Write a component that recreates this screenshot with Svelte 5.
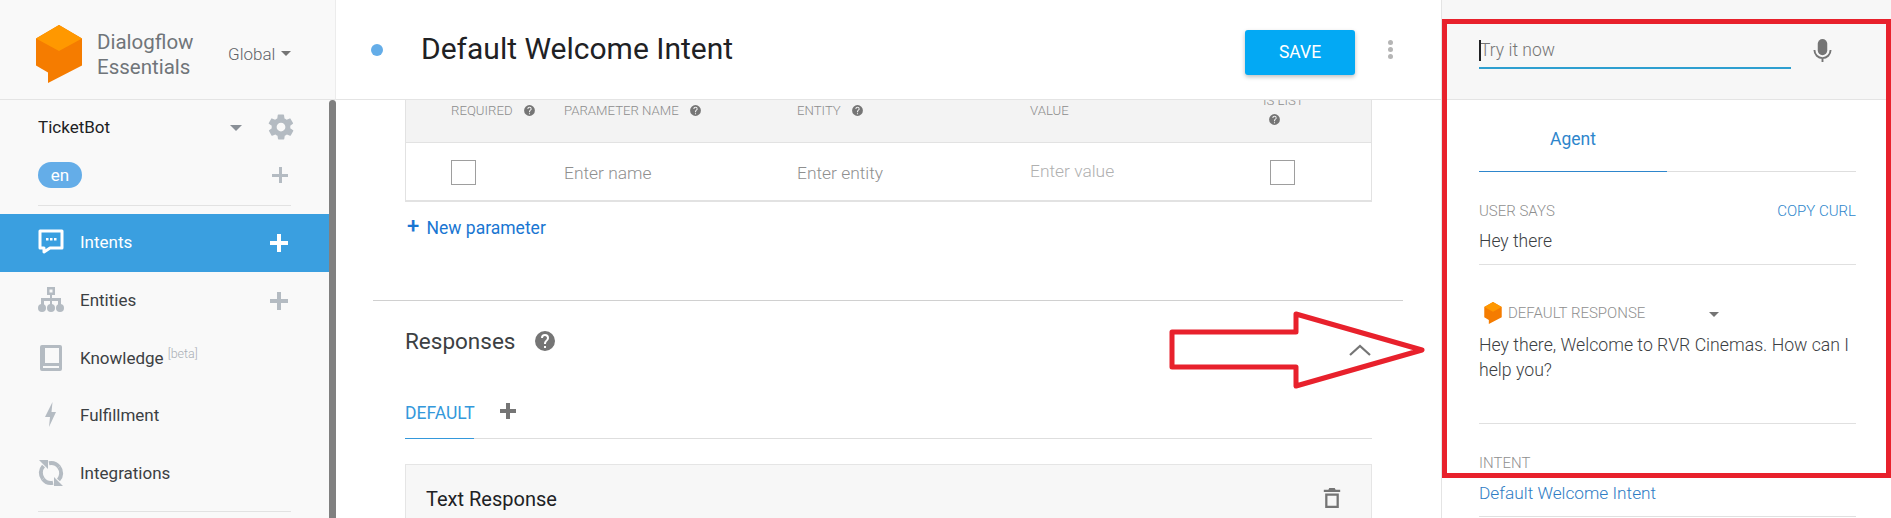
<script>
  const nav = [
    { label: 'Entities', icon: 'entities', plus: true },
    { label: 'Knowledge', icon: 'book', beta: true },
    { label: 'Fulfillment', icon: 'bolt' },
    { label: 'Integrations', icon: 'sync' }
  ];
  const help = 'M12 2a10 10 0 1 0 0 20 10 10 0 0 0 0-20zm1 17h-2v-2h2v2zm2.070-7.750-.9.920C13.450 12.900 13 13.500 13 15h-2v-.5c0-1.100.450-2.100 1.170-2.830l1.240-1.260A2 2 0 1 0 10 9H8a4 4 0 1 1 8 0c0 .880-.360 1.680-.930 2.250z';
</script>

<div class="app">
  <aside class="side">
    <div class="brand">
      <svg class="logo" viewBox="0 0 46 58">
        <path d="M23 0 46 13.500v27L12 58V47.500L0 40.500V13.500z" fill="#f57c00" />
        <path d="M23 0 46 13.500 23 26 0 13.500z" fill="#ff9800" />
      </svg>
      <div class="wordmark"><span>Dialogflow</span><span>Essentials</span></div>
      <div class="region">Global<i class="caret"></i></div>
    </div>
    <div class="side-body">
      <nav class="nav">
        <div class="agent">
          <span class="agent-name">TicketBot</span>
          <i class="caret agent-caret"></i>
          <svg class="gear" viewBox="0 0 24 24"><path fill="#b4bbc2" d="M19.400 13a7.600 7.600 0 0 0 0-2l2.100-1.600a.5.5 0 0 0 .1-.6l-2-3.500a.5.5 0 0 0-.6-.2l-2.500 1a7.300 7.300 0 0 0-1.700-1l-.4-2.700a.5.5 0 0 0-.5-.4h-4a.5.5 0 0 0-.5.4l-.4 2.700a7.300 7.300 0 0 0-1.700 1l-2.500-1a.5.5 0 0 0-.6.2l-2 3.500a.5.5 0 0 0 .1.600L4.600 11a7.600 7.600 0 0 0 0 2l-2.100 1.600a.5.5 0 0 0-.1.6l2 3.500c.1.200.4.300.6.200l2.500-1c.5.400 1.100.7 1.700 1l.4 2.700c0 .2.200.4.500.4h4c.3 0 .5-.2.500-.4l.4-2.700c.6-.3 1.200-.6 1.700-1l2.500 1c.2.100.5 0 .6-.2l2-3.500a.5.5 0 0 0-.1-.6zM12 15.500a3.500 3.500 0 1 1 0-7 3.500 3.500 0 0 1 0 7z" /></svg>
        </div>
        <div class="lang">
          <span class="pill">en</span>
          <span class="plus grey small"></span>
        </div>
        <div class="rule"></div>
        <div class="item active">
          <svg class="ico" viewBox="0 0 26 26"><path d="M2 2h22v17H12l-6 4v-4H2z" fill="none" stroke="#fff" stroke-width="3" stroke-linejoin="round" /><path d="M8 9h2.500v2.500H8zM12 9h2.500v2.500H12zM16 9h2.500v2.500H16z" fill="#fff" /></svg>
          <span>Intents</span>
          <span class="plus white"></span>
        </div>
        {#each nav as n}
          <div class="item">
            <svg class="ico" viewBox="0 0 26 26">
              {#if n.icon === 'entities'}
                <g fill="#b4bbc2">
                  <path d="M9 0h8v8h-3v3h9v7h-3v-4h-6v4h-2v-4H6v4H3v-7h9V8H9zm2.500 2.500v3h3v-3z" />
                  <circle cx="4" cy="21" r="4" /><circle cx="13" cy="21" r="4" /><circle cx="22" cy="21" r="4" />
                </g>
              {:else if n.icon === 'book'}
                <path fill="#b4bbc2" d="M4 0h18a2 2 0 0 1 2 2v22a2 2 0 0 1-2 2H4a2 2 0 0 1-2-2V2a2 2 0 0 1 2-2zm3 3v15h14V3zM5 21v2h16v-2z" />
              {:else if n.icon === 'bolt'}
                <path fill="#b4bbc2" d="M14.500 0 7 15h5l-1 10 7-15h-4.500z" />
              {:else}
                <g fill="none" stroke="#b4bbc2" stroke-width="4">
                  <path d="M5 19A10 10 0 0 1 5.500 6" /><path d="M11 3.200A10 10 0 0 1 21 7" /><path d="M21 7a10 10 0 0 1-.500 13" /><path d="M15 22.800A10 10 0 0 1 5 19" />
                </g>
                <path fill="#b4bbc2" d="M1 0h9v9zM25 26h-9v-9z" />
              {/if}
            </svg>
            <span>{n.label}{#if n.beta}<sup>[beta]</sup>{/if}</span>
            {#if n.plus}<span class="plus grey"></span>{/if}
          </div>
        {/each}
        <div class="rule last"></div>
      </nav>
      <div class="track"><div class="thumb"></div></div>
    </div>
  </aside>

  <main class="main">
    <header class="top">
      <i class="dot"></i>
      <h1>Default Welcome Intent</h1>
      <button class="save">SAVE</button>
      <span class="more"><i></i><i></i><i></i></span>
    </header>
    <div class="scroll">
      <section class="table">
        <div class="row head">
          <div class="cell low">REQUIRED <svg viewBox="0 0 24 24"><path fill="#757575" d={help} /></svg></div>
          <div class="cell low">PARAMETER NAME <svg viewBox="0 0 24 24"><path fill="#757575" d={help} /></svg></div>
          <div class="cell low">ENTITY <svg viewBox="0 0 24 24"><path fill="#757575" d={help} /></svg></div>
          <div class="cell low">VALUE</div>
          <div class="cell stack">IS LIST<svg viewBox="0 0 24 24"><path fill="#757575" d={help} /></svg></div>
        </div>
        <div class="row body">
          <div class="cell"><span class="check"></span></div>
          <div class="cell ph">Enter name</div>
          <div class="cell ph">Enter entity</div>
          <div class="cell ph light">Enter value</div>
          <div class="cell"><span class="check narrow"></span></div>
        </div>
      </section>
      <div class="new"><span class="newplus">+</span> New parameter</div>
      <div class="divider"></div>
      <div class="resp-head">
        <h2>Responses</h2>
        <svg class="big-help" viewBox="2 2 20 20"><path fill="#757575" d={help} /></svg>
        <svg class="chev" viewBox="0 0 22 12"><path d="M1 11 11 2l10 9" fill="none" stroke="#757575" stroke-width="2.200" /></svg>
      </div>
      <div class="tabs">
        <span class="tab">DEFAULT</span>
        <span class="plus dark"></span>
      </div>
      <div class="box">
        <span>Text Response</span>
        <svg class="trash" viewBox="0 0 18 22"><path fill="#757575" d="M6 0h6l1 2h5v2.500H0V2h5zM1.500 6h15v16h-15zM4 8.500v11h10v-11z" /></svg>
      </div>
    </div>
  </main>

  <aside class="try">
    <div class="try-top">
      <div class="input"><i class="cursor"></i>Try it now</div>
      <svg class="mic" viewBox="0 0 20 24"><path fill="#757575" d="M10 0a5 5 0 0 1 5 5v7a5 5 0 0 1-10 0V5a5 5 0 0 1 5-5z" /><path d="M1.500 11.500a8.500 8.500 0 0 0 17 0M10 20v4" fill="none" stroke="#757575" stroke-width="2" /></svg>
    </div>
    <div class="try-body">
      <div class="agent-tabs"><span class="agent-tab">Agent</span></div>
      <div class="split"><span class="label">USER SAYS</span><span class="curl">COPY CURL</span></div>
      <p class="says">Hey there</p>
      <div class="resp-label">
        <svg viewBox="0 0 46 58"><path d="M23 0 46 13.500v27L12 58V47.500L0 40.500V13.500z" fill="#f57c00" /><path d="M23 0 46 13.500 23 26 0 13.500z" fill="#ff9800" /></svg>
        <span class="label">DEFAULT RESPONSE</span>
        <i class="caret"></i>
      </div>
      <p class="reply">Hey there, Welcome to RVR Cinemas. How can I help you?</p>
      <div class="label intent">INTENT</div>
      <p class="intent-name">Default Welcome Intent</p>
    </div>
  </aside>

  <svg class="marks" viewBox="0 0 1891 518" aria-hidden="true">
    <path d="M1172 332h124v-18l126 36-126 36v-19h-124z" fill="none" stroke="#e8212c" stroke-width="5" stroke-linejoin="round" />
    <rect x="1444.500" y="21.500" width="444" height="454" fill="none" stroke="#e8212c" stroke-width="5" />
  </svg>
</div>

<style>
  :global(body) { margin: 0; background: #fff; }
  .app {
    position: relative;
    display: grid;
    grid-template-columns: 336px 1106px 449px;
    height: 518px;
    overflow: hidden;
    font-family: Roboto, "Liberation Sans", sans-serif;
    font-size: 17.500px;
    color: #202124;
  }

  .side { background: #f9f9f9; display: flex; flex-direction: column; min-height: 0; font-size: 17px; }
  .brand {
    height: 100px;
    flex: none;
    box-sizing: border-box;
    border-bottom: 1px solid #e4e4e4;
    border-right: 1px solid #ececec;
    display: flex;
    align-items: center;
    padding-left: 36px;
  }
  .logo { width: 46px; height: 58px; margin-top: 9px; flex: none; }
  .wordmark {
    display: flex;
    flex-direction: column;
    margin: 10px 0 0 15px;
    font-size: 20.500px;
    line-height: 25px;
    color: #70757a;
    width: 131px;
  }
  .region { color: #5f6368; font-weight: 300; display: flex; align-items: center; margin-top: 8px; }
  .caret {
    display: inline-block;
    width: 0;
    height: 0;
    border-left: 5px solid transparent;
    border-right: 5px solid transparent;
    border-top: 5px solid #757575;
    margin-left: 6px;
  }
  .side-body { flex: 1; display: flex; min-height: 0; }
  .nav { width: 329px; flex: none; }
  .track { width: 7px; }
  .thumb { height: 100%; background: #808080; border-radius: 4px 4px 0 0; }
  .agent { display: flex; align-items: center; height: 26px; margin: 14px 0 0 38px; }
  .agent-name { width: 192px; }
  .agent-caret { border-top-color: #8a9097; border-left-width: 6px; border-right-width: 6px; border-top-width: 6px; margin: 2px 0 0; }
  .gear { width: 30px; height: 30px; margin-left: 24px; }
  .lang { display: flex; align-items: center; margin: 22px 0 0 38px; height: 26px; position: relative; }
  .pill {
    width: 44px;
    height: 26px;
    line-height: 26px;
    text-align: center;
    border-radius: 13px;
    background: #64ade8;
    color: #fff;
  }
  .rule { height: 1px; background: #e2e2e2; margin: 17px 38px 0; }
  .rule.last { margin-top: 8px; }
  .item {
    display: flex;
    align-items: center;
    box-sizing: border-box;
    height: 57.700px;
    padding: 0 0 2px 38px;
    position: relative;
    color: #3c4043;
  }
  .item.active { background: #3a9fe0; color: #fff; height: 58px; margin-top: 8px; }
  .ico { width: 26px; height: 26px; margin-right: 16px; flex: none; }
  sup { font-size: 12.500px; color: #a9afb5; font-weight: 300; margin-left: 4px; vertical-align: 6px; line-height: 0; }
  .plus { position: absolute; width: 18px; height: 18px; right: 41px; top: 50%; margin-top: -9px; }
  .plus::before, .plus::after { content: ""; position: absolute; background: currentColor; }
  .plus::before { left: 0; right: 0; top: 7px; height: 4px; }
  .plus::after { top: 0; bottom: 0; left: 7px; width: 4px; }
  .plus.white { color: #fff; }
  .plus.grey { color: #b4bbc2; }
  .plus.small { width: 16px; height: 16px; right: 41px; margin-top: -8px; }
  .plus.small::before { top: 6.500px; height: 3px; }
  .plus.small::after { left: 6.500px; width: 3px; }

  .main { display: flex; flex-direction: column; min-height: 0; background: #fff; }
  .top {
    height: 100px;
    flex: none;
    box-sizing: border-box;
    border-bottom: 1px solid #e4e4e4;
    display: flex;
    align-items: center;
    padding-left: 35px;
  }
  .dot { width: 12px; height: 12px; background: #64ade8; border-radius: 50%; flex: none; }
  h1 { margin: 0 0 3px 38px; font-size: 30px; font-weight: 400; color: #202124; width: 824px; flex: none; white-space: nowrap; }
  .save {
    width: 110px;
    height: 45px;
    margin-top: 5px;
    border: 0;
    border-radius: 3px;
    background: #03a9f4;
    color: #fff;
    font: 400 17.500px Roboto, sans-serif;
    box-shadow: 0 2px 4px rgba(0, 0, 0, .25);
    flex: none;
  }
  .more { display: flex; flex-direction: column; gap: 2px; margin: 0 0 0 33px; }
  .more i { width: 5px; height: 5px; border-radius: 50%; background: #b5b5b5; }

  .scroll { flex: 1; overflow: hidden; min-height: 0; }
  .table {
    margin: -13px 0 0 69px;
    width: 967px;
    box-sizing: border-box;
    border: 1px solid #e2e2e2;
    border-bottom-width: 2px;
    font-weight: 300;
  }
  .row { display: grid; grid-template-columns: 113px 233px 233px 233px 1fr; padding-left: 45px; }
  .head { height: 54px; background: #f3f3f3; border-bottom: 1px solid #e2e2e2; box-sizing: content-box; font-size: 13.200px; color: #8d8d8d; }
  .head svg { width: 13px; height: 13px; vertical-align: -2px; margin-left: 7px; }
  .low { padding-top: 13px; line-height: 20px; height: 20px; white-space: nowrap; }
  .stack { display: flex; flex-direction: column; align-items: flex-start; line-height: 20px; padding-top: 3px; }
  .stack svg { margin: 2px 0 0 5px; }
  .body { height: 57px; align-items: center; }
  .ph { color: #8f8f8f; font-size: 17.400px; padding-top: 2px; }
  .ph.light { color: #b0b0b0; padding-top: 0; margin-bottom: 2px; }
  .check { display: block; width: 23px; height: 23px; border: 1.500px solid #9e9e9e; margin-top: 1px; box-sizing: content-box; }
  .check.narrow { margin-left: 7px; }
  .new { margin: 14px 0 0 71px; color: #1976d2; font-weight: 400; line-height: 20px; }
  .newplus { font-size: 22px; font-weight: 500; line-height: 20px; margin-right: 3px; vertical-align: 1px; }
  .divider { height: 1px; background: #d0d0d0; margin: 62px 39px 0 37px; }
  .resp-head { display: flex; align-items: center; margin: 28px 0 0 69px; height: 24px; position: relative; }
  h2 { margin: 0; font-size: 22.500px; font-weight: 400; color: #3c4043; }
  .big-help { width: 20px; height: 20px; margin-left: 20px; }
  .chev { position: absolute; left: 944px; top: 15px; width: 22px; height: 12px; }
  .tabs {
    margin: 47px 70px 0 69px;
    height: 38px;
    border-bottom: 1px solid #dedede;
    position: relative;
    display: flex;
  }
  .tab { color: #3498db; height: 38px; line-height: 26px; border-bottom: 1px solid #3498db; width: 69px; font-weight: 400; white-space: nowrap; }
  .plus.dark { color: #757575; left: 95px; right: auto; width: 16px; height: 16px; top: 12px; }
  .plus.dark::before { top: 6px; height: 3.500px; }
  .plus.dark::after { left: 6px; width: 3.500px; }
  .box {
    margin: 25px 70px 0 69px;
    height: 80px;
    background: #f7f7f7;
    border: 1px solid #e5e5e5;
    box-sizing: border-box;
    padding: 21px 0 0 20px;
    display: flex;
    font-size: 20px;
    line-height: 26px;
    position: relative;
  }
  .trash { position: absolute; left: 917px; top: 23px; width: 18px; height: 20px; }

  .try { display: flex; flex-direction: column; border-left: 1px solid #e4e4e4; margin-left: -1px; min-height: 0; }
  .try-top {
    height: 100px;
    flex: none;
    box-sizing: border-box;
    background: #f7f7f7;
    border-bottom: 1px solid #e4e4e4;
    display: flex;
    align-items: center;
    padding-left: 37px;
  }
  .input {
    width: 312px;
    height: 28px;
    line-height: 19px;
    border-bottom: 2px solid #2e9fd0;
    color: #757575;
    font-weight: 300;
    margin-top: 11px;
    position: relative;
    padding-left: 1px;
    box-sizing: border-box;
  }
  .cursor { position: absolute; left: 0; top: -1px; width: 2px; height: 21px; background: #202124; }
  .mic { width: 19px; height: 23px; margin: 1px 0 0 22px; }
  .try-body { padding: 0 35px 0 37px; font-weight: 300; }
  .agent-tabs {
    height: 71px;
    border-bottom: 1px solid #dedede;
    display: flex;
  }
  .agent-tab {
    width: 188px;
    height: 71px;
    line-height: 78px;
    text-align: center;
    color: #2e86cc;
    font-weight: 400;
    border-bottom: 1px solid #2e86cc;
  }
  .split { display: flex; justify-content: space-between; margin-top: 29px; line-height: 20px; }
  .label { font-size: 15px; color: #8f8f8f; }
  .curl { font-size: 15px; color: #2e86cc; }
  .says { margin: 9px 0 0; line-height: 22px; height: 34px; border-bottom: 1px solid #e0e0e0; color: #3c4043; }
  .resp-label { display: flex; align-items: center; height: 22px; margin-top: 37px; }
  .resp-label svg { width: 18px; height: 22px; margin-left: 5px; flex: none; }
  .resp-label .label { margin-left: 6px; width: 196px; white-space: nowrap; }
  .resp-label .caret { margin: 2px 0 0 5px; }
  .reply {
    margin: 9px 0 0;
    font-size: 17.700px;
    line-height: 25px;
    height: 90px;
    color: #3c4043;
    border-bottom: 1px solid #e0e0e0;
  }
  .intent { margin-top: 29px; line-height: 20px; }
  .intent-name { margin: 9px 0 0; font-size: 17.300px; line-height: 22px; color: #2e7cc4; font-weight: 300; height: 34px; border-bottom: 1px solid #e0e0e0; }

  .marks { position: absolute; inset: 0; width: 1891px; height: 518px; pointer-events: none; }
</style>
